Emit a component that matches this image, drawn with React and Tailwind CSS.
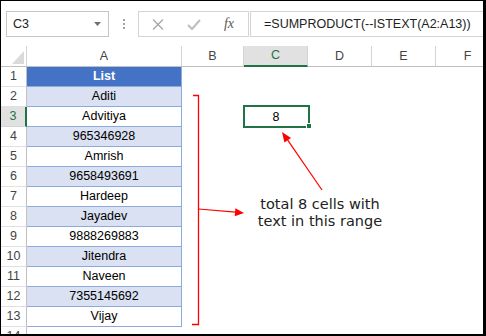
import React from "react";

const rows = [
  { n: 1, v: "List" },
  { n: 2, v: "Aditi" },
  { n: 3, v: "Advitiya" },
  { n: 4, v: "965346928" },
  { n: 5, v: "Amrish" },
  { n: 6, v: "9658493691" },
  { n: 7, v: "Hardeep" },
  { n: 8, v: "Jayadev" },
  { n: 9, v: "9888269883" },
  { n: 10, v: "Jitendra" },
  { n: 11, v: "Naveen" },
  { n: 12, v: "7355145692" },
  { n: 13, v: "Vijay" },
  { n: 14, v: "" },
];

const Toolbar = () => (
  <div className="h-[45px] shrink-0 flex items-start pt-[10px] pl-[5px]">
    <div className="w-[103px] h-[26px] shrink-0 border border-[#c6c6c6] flex items-center justify-between pl-[6px] pr-[7px] text-[12.5px] text-[#222]">
      <span>C3</span>
      <svg width="7" height="4" viewBox="0 0 7 4">
        <polygon points="0,0 7,0 3.5,4" fill="#707070" />
      </svg>
    </div>
    <div className="w-[29px] h-[26px] shrink-0 flex flex-col items-center justify-center gap-[2px]">
      <span className="w-[2px] h-[2px] bg-[#a0a0a0]" />
      <span className="w-[2px] h-[2px] bg-[#a0a0a0]" />
      <span className="w-[2px] h-[2px] bg-[#a0a0a0]" />
    </div>
    <div className="w-[111px] h-[26px] shrink-0 border border-[#d4d4d4] flex items-center">
      <div className="w-[37px] flex justify-center">
        <svg width="12" height="11" viewBox="0 0 12 11">
          <path d="M1 0.5 L11 10.5 M11 0.5 L1 10.5" stroke="#a6a6a6" strokeWidth="1.3" fill="none" />
        </svg>
      </div>
      <div className="w-[35px] flex justify-center">
        <svg width="14" height="11" viewBox="0 0 14 11">
          <path d="M1 6 L5 10 L13 1" stroke="#bdbdbd" strokeWidth="2" fill="none" />
        </svg>
      </div>
      <div className="w-[36px] flex justify-center font-['Liberation_Serif',serif] italic text-[14px] text-[#5a5a5a] leading-none">
        fx
      </div>
    </div>
    <div className="ml-[1px] flex-1 h-[26px] border border-r-0 border-[#d4d4d4] flex items-center pl-[13px] text-[12.5px] text-[#222] whitespace-nowrap">
      =SUMPRODUCT(--ISTEXT(A2:A13))
    </div>
  </div>
);

const HeaderRow = () => (
  <div className="h-[21px] shrink-0 flex text-[12.5px] text-[#444]">
    <div className="w-[26px] shrink-0 border-r border-b border-r-[#d4d4d4] border-b-[#bfbfbf] flex items-end justify-end pr-[2px] pb-[2px]">
      <svg width="12" height="13" viewBox="0 0 12 13">
        <polygon points="12,0 12,13 0,13" fill="#dadada" />
      </svg>
    </div>
    <div className="w-[155px] shrink-0 border-r border-b border-r-[#d4d4d4] border-b-[#bfbfbf] flex items-center justify-center">A</div>
    <div className="w-[62px] shrink-0 border-r border-b border-r-[#d4d4d4] border-b-[#bfbfbf] flex items-center justify-center">B</div>
    <div className="w-[64px] shrink-0 bg-[#e1e1e1] border-r border-r-[#d4d4d4] border-b-2 border-b-[#217346] text-[#217346] flex items-center justify-center">C</div>
    <div className="w-[64px] shrink-0 border-r border-b border-r-[#d4d4d4] border-b-[#bfbfbf] flex items-center justify-center">D</div>
    <div className="w-[64px] shrink-0 border-r border-b border-r-[#d4d4d4] border-b-[#bfbfbf] flex items-center justify-center">E</div>
    <div className="w-[64px] shrink-0 border-r border-b border-r-[#d4d4d4] border-b-[#bfbfbf] flex items-center justify-center">F</div>
  </div>
);

const Row = ({ n, v }) => {
  const sel = n === 3;
  const head = n === 1;
  const shade = n % 2 === 0 && n <= 12;
  const inTable = n <= 13;
  return (
    <div className="h-[20px] shrink-0 flex text-[12.5px]">
      <div
        className={
          sel
            ? "w-[26px] shrink-0 bg-[#e1e1e1] border-r-2 border-r-[#217346] border-b border-b-[#d4d4d4] text-[#217346] flex items-center justify-center"
            : "w-[26px] shrink-0 border-r border-r-[#bfbfbf] border-b border-b-[#e1e1e1] text-[#444] flex items-center justify-center"
        }
      >
        {n}
      </div>
      <div
        className={
          head
            ? "w-[155px] shrink-0 bg-[#4472c4] border-r border-b border-[#8ea9db] text-white font-bold flex items-center justify-center"
            : inTable
            ? `w-[155px] shrink-0 ${shade ? "bg-[#d9e1f2]" : "bg-white"} border-r border-b border-[#8ea9db] text-black flex items-center justify-center`
            : "w-[155px] shrink-0"
        }
      >
        {v}
      </div>
      <div className="w-[62px] shrink-0" />
      <div className="relative w-[64px] shrink-0 flex items-center justify-center text-black">
        {sel && (
          <>
            <span>8</span>
            <div className="absolute -left-px -top-[2px] w-[67px] h-[23px] border-2 border-[#217346]" />
            <div className="absolute left-[62px] top-[16px] w-[6px] h-[6px] bg-[#217346] border border-white" />
          </>
        )}
      </div>
      <div className="flex-1" />
    </div>
  );
};

export default function App() {
  return (
    <div className="relative w-[486px] h-[336px] overflow-hidden bg-white font-['Liberation_Sans',Arial,sans-serif]">
      <div className="h-full flex flex-col border-t border-l border-r-[3px] border-b-2 border-black overflow-hidden">
        <Toolbar />
        <HeaderRow />
        {rows.map((r) => (
          <Row key={r.n} {...r} />
        ))}
      </div>

      <svg className="absolute left-0 top-0" width="486" height="336" viewBox="0 0 486 336">
        <path d="M193 95.5 H198.5 V324.5 H192" stroke="#ff0000" strokeWidth="1.3" fill="none" />
        <line x1="198.5" y1="209" x2="235.5" y2="212.2" stroke="#ff0000" strokeWidth="1.2" />
        <polygon points="244,213 235.4,208.2 234.7,216.2" fill="#ff0000" />
        <line x1="322" y1="190" x2="287.7" y2="140.2" stroke="#ff0000" strokeWidth="1.2" />
        <polygon points="282,132 291,138 284.4,142.5" fill="#ff0000" />
      </svg>

      <div className="absolute left-[250px] top-[196px] w-[140px] text-center font-['DejaVu_Sans',Verdana,sans-serif] text-[14.5px] leading-[17px] text-[#222]">
        total 8 cells with
        <br />
        text in this range
      </div>
    </div>
  );
}
